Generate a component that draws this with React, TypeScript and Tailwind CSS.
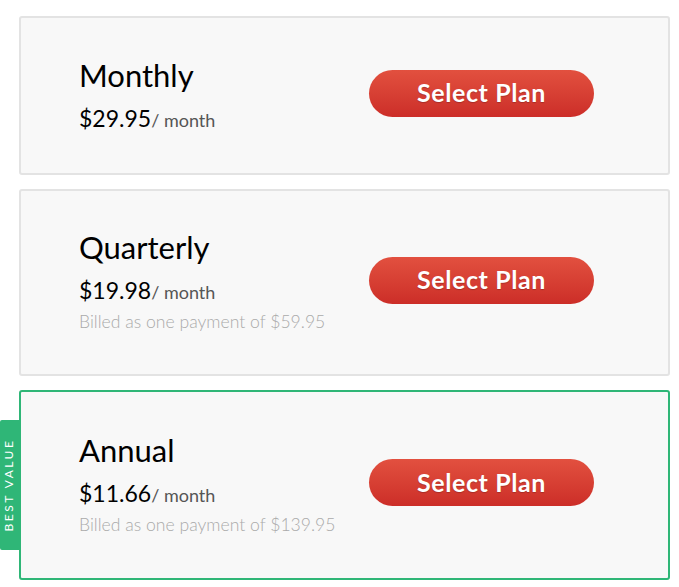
import React from 'react'

const plans = [
    { id: 'monthly', title: 'Monthly', price: '$29.95', billed: null, h: 'h-[159px]' },
    { id: 'quarterly', title: 'Quarterly', price: '$19.98', billed: 'Billed as one payment of $59.95', h: 'h-[187px]' },
    { id: 'annual', title: 'Annual', price: '$11.66', billed: 'Billed as one payment of $139.95', h: 'h-[190px]', best: true },
]

function PlanCard({ plan }) {
    return (
        <div
            className={`relative w-full ${plan.h} flex items-center bg-[#f8f8f8] rounded-[3px] border-2
            ${plan.best ? 'border-[#2fb677]' : 'border-[#e3e3e3]'}`}
        >
            {plan.best && (
                <div className="absolute -left-[21px] top-[28px] w-[19px] h-[130px] bg-[#2fb677] rounded-l-[2px] flex items-center justify-center">
                    <span className="-rotate-90 whitespace-nowrap text-white text-[12px] tracking-[2.5px] font-['Lato',sans-serif]">
                        BEST VALUE
                    </span>
                </div>
            )}
            <div className="w-[348px] shrink-0 pl-[58px] flex flex-col whitespace-nowrap font-['Lato',sans-serif]">
                <p className="text-[31px] leading-[36px] text-black">{plan.title}</p>
                <p className="mt-[10px] text-[23px] leading-[30px] text-black">
                    {plan.price}
                    <span className="text-[18px] text-[#555]">/ month</span>
                </p>
                {plan.billed && (
                    <p className="text-[17.6px] leading-[29px] font-light text-[#aaa]">{plan.billed}</p>
                )}
            </div>
            <button className="w-[225px] h-[47px] mb-[5px] shrink-0 rounded-full bg-gradient-to-b from-[#e2503f] to-[#cc2d28] text-white text-[25px] tracking-[0.6px] font-bold font-['Lato',sans-serif] [text-shadow:0_1px_1px_rgba(0,0,0,0.2)]">
                Select Plan
            </button>
        </div>
    )
}

export default function App() {
    return (
        <div className="w-[679px] h-[587px] bg-white pl-[19px] pr-[9px] pt-[16px] flex flex-col gap-[14px]">
            {plans.map((plan) => (
                <PlanCard key={plan.id} plan={plan} />
            ))}
        </div>
    )
}
